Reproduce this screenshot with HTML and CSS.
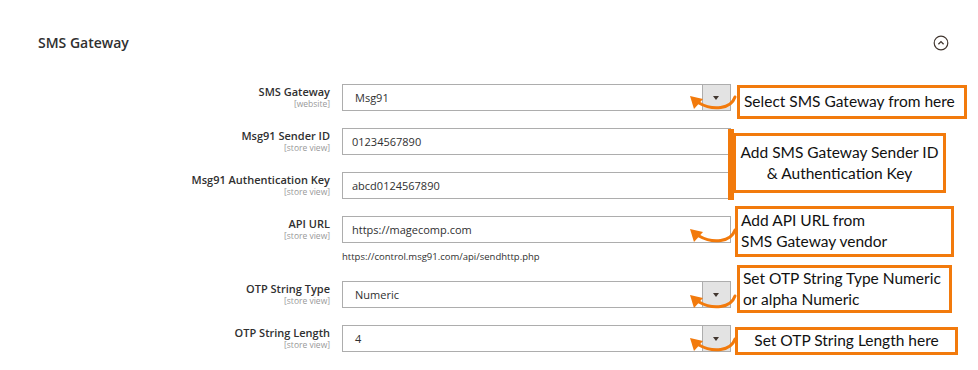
FILE: index.html
```html
<!DOCTYPE html>
<html lang="en">
<head>
    <meta charset="UTF-8">
    <title>SMS Gateway</title>
    <link rel="stylesheet" href="styles.css">
</head>
<body>
<div class="section">
    <div class="section-head">
        <h2>SMS Gateway</h2>
        <span class="toggle">
            <svg width="16" height="16" viewBox="0 0 16 16">
                <circle cx="8" cy="8" r="6.8" fill="none" stroke="#41362f" stroke-width="1.2"/>
                <path d="M5.4 9.2 L8 6.6 L10.6 9.2" fill="none" stroke="#41362f" stroke-width="1.3"/>
            </svg>
        </span>
    </div>

    <div class="fields">
        <div class="row">
            <div class="label">SMS Gateway<span class="scope">[website]</span></div>
            <div class="control">
                <div class="select">Msg91<span class="btn"></span></div>
            </div>
        </div>
        <div class="row">
            <div class="label">Msg91 Sender ID<span class="scope">[store view]</span></div>
            <div class="control">
                <div class="input">01234567890</div>
            </div>
        </div>
        <div class="row">
            <div class="label">Msg91 Authentication Key<span class="scope">[store view]</span></div>
            <div class="control">
                <div class="input">abcd0124567890</div>
            </div>
        </div>
        <div class="row">
            <div class="label">API URL<span class="scope">[store view]</span></div>
            <div class="control">
                <div class="input">https://magecomp.com</div>
                <div class="note">https://control.msg91.com/api/sendhttp.php</div>
            </div>
        </div>
        <div class="row">
            <div class="label">OTP String Type<span class="scope">[store view]</span></div>
            <div class="control">
                <div class="select">Numeric<span class="btn"></span></div>
            </div>
        </div>
        <div class="row">
            <div class="label">OTP String Length<span class="scope">[store view]</span></div>
            <div class="control">
                <div class="select">4<span class="btn"></span></div>
            </div>
        </div>
    </div>

    <!-- annotations drawn over the form -->
    <div class="callout c1">Select SMS Gateway from here</div>
    <div class="callout c2 center">Add SMS Gateway Sender ID<br>&amp; Authentication Key</div>
    <div class="callout c3">Add API URL from<br>SMS Gateway vendor</div>
    <div class="callout c4">Set OTP String Type Numeric<br>or alpha Numeric</div>
    <div class="callout c5 center">Set OTP String Length here</div>

    <svg class="arrow a1" width="48" height="22" viewBox="0 0 48 22"><path d="M46 4 C42 16 24 18 10 10" fill="none" stroke="#f27a0c" stroke-width="3" stroke-linecap="round"/><polygon points="1,3 14,6 5,16" fill="#f27a0c"/></svg>
    <svg class="arrow a3" width="48" height="22" viewBox="0 0 48 22"><path d="M46 4 C42 16 24 18 10 10" fill="none" stroke="#f27a0c" stroke-width="3" stroke-linecap="round"/><polygon points="1,3 14,6 5,16" fill="#f27a0c"/></svg>
    <svg class="arrow a4" width="48" height="22" viewBox="0 0 48 22"><path d="M46 4 C42 16 24 18 10 10" fill="none" stroke="#f27a0c" stroke-width="3" stroke-linecap="round"/><polygon points="1,3 14,6 5,16" fill="#f27a0c"/></svg>
    <svg class="arrow a5" width="48" height="22" viewBox="0 0 48 22"><path d="M46 4 C42 16 24 18 10 10" fill="none" stroke="#f27a0c" stroke-width="3" stroke-linecap="round"/><polygon points="1,3 14,6 5,16" fill="#f27a0c"/></svg>
</div>
</body>
</html>
```

FILE: styles.css
```css
html, body {
    margin: 0;
    background: #fff;
}

body {
    font-family: 'Open Sans', sans-serif;
    color: #303030;
}

.section {
    position: relative;
    width: 978px;
    height: 370px;
}

.section-head {
    display: flex;
    align-items: center;
    justify-content: space-between;
    height: 84px;
    padding: 0 29px 0 38px;
    box-sizing: border-box;
}

.section-head h2 {
    margin: 0;
    font-size: 14px;
    font-weight: 600;
    color: #303030;
}

.toggle {
    display: flex;
    margin-top: 2px;
}

.row {
    display: flex;
    margin-bottom: 17px;
}

.label {
    width: 330px;
    padding-top: 1px;
    text-align: right;
    font-size: 11px;
    font-weight: 600;
    line-height: 13px;
    color: #303030;
}

.scope {
    display: block;
    font-size: 8.5px;
    font-weight: 400;
    line-height: 11px;
    color: #999;
}

.control {
    width: 389px;
    margin-left: 12px;
}

.input, .select {
    position: relative;
    height: 27px;
    border: 1px solid #adadad;
    box-sizing: border-box;
    padding: 0 9px;
    font-size: 11px;
    line-height: 25px;
    color: #303030;
}

.select {
    padding-left: 12px;
}

.select .btn {
    position: absolute;
    top: 0;
    right: 0;
    width: 27px;
    height: 25px;
    background: #e3e3e3;
    border-left: 1px solid #adadad;
}

.select .btn::after {
    content: '';
    position: absolute;
    left: 10px;
    top: 11px;
    border-left: 3.5px solid transparent;
    border-right: 3.5px solid transparent;
    border-top: 4px solid #41362f;
}

.note {
    margin-top: 7px;
    font-size: 9.5px;
    line-height: 14px;
    color: #303030;
}

.callout {
    position: absolute;
    border: 3px solid #f27a0c;
    background: #fff;
    box-sizing: border-box;
    font-family: Lato, sans-serif;
    font-size: 15.5px;
    line-height: 21px;
    color: #111;
    padding: 0 3px;
    white-space: nowrap;
}

.callout.center {
    text-align: center;
}

.c1 { left: 737px; top: 85px; width: 230px; height: 34px; padding-top: 3px; padding-left: 4px; }
.c2 { left: 733px; top: 133px; width: 213px; height: 60px; padding-top: 6px; }
.c3 { left: 735px; top: 206px; width: 219px; height: 51px; padding-top: 1px; }
.c4 { left: 737px; top: 265px; width: 215px; height: 48px; padding-top: 0; }
.c5 { left: 735px; top: 327px; width: 223px; height: 28px; padding-top: 0; }

.c2::before {
    content: '';
    position: absolute;
    left: -8px;
    top: -7px;
    width: 6px;
    height: 71px;
    background: #f27a0c;
}

.arrow {
    position: absolute;
    left: 689px;
}

.a1 { top: 93px; }
.a3 { top: 226px; }
.a4 { top: 292px; }
.a5 { top: 335px; }
```
